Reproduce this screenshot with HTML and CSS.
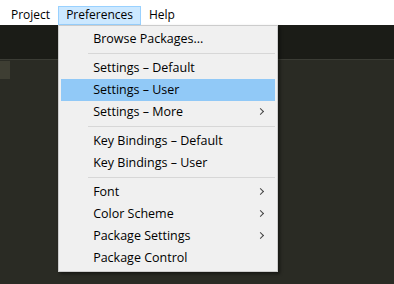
FILE: index.html
```html
<!DOCTYPE html>
<html lang="en">
<head>
  <meta charset="UTF-8" />
  <title>Preferences menu</title>
  <link rel="stylesheet" href="styles.css">
</head>
<body>
  <nav class="menubar">
    <div class="menu-item">Project</div>
    <div class="menu-item open">
      Preferences
      <ul class="dropdown">
        <li>Browse Packages...</li>
        <li class="sep"></li>
        <li>Settings – Default</li>
        <li class="active">Settings – User</li>
        <li class="sub">Settings – More</li>
        <li class="sep"></li>
        <li>Key Bindings – Default</li>
        <li>Key Bindings – User</li>
        <li class="sep"></li>
        <li class="sub">Font</li>
        <li class="sub">Color Scheme</li>
        <li class="sub">Package Settings</li>
        <li>Package Control</li>
      </ul>
    </div>
    <div class="menu-item">Help</div>
  </nav>

  <main class="workspace">
    <div class="tabbar"></div>
    <div class="editor">
      <div class="gutter-mark"></div>
    </div>
  </main>
</body>
</html>
```

FILE: styles.css
```css
* {
  margin: 0;
  padding: 0;
  box-sizing: border-box;
}

html, body {
  height: 100%;
}

body {
  font-family: 'Open Sans', 'Noto Sans', sans-serif;
  font-size: 12px;
  color: #000;
  background: #2a2b24;
  display: flex;
  flex-direction: column;
  overflow: hidden;
}

.menubar {
  display: flex;
  background: #fff;
  height: 25px;
  padding: 6px 0 0 3px;
}

.menu-item {
  position: relative;
  height: 19px;
  line-height: 16px;
  padding: 0 7px;
  border: 1px solid transparent;
  cursor: default;
}

.menu-item.open {
  background: #cce8ff;
  border-color: #99d1ff;
}

.dropdown {
  position: absolute;
  top: 18px;
  left: -1px;
  width: 220px;
  list-style: none;
  background: #f0f0f0;
  border: 1px solid #cccccc;
  box-shadow: 2px 2px 3px rgba(0, 0, 0, 0.45);
  padding: 2px;
  z-index: 10;
}

.dropdown li {
  position: relative;
  height: 22px;
  line-height: 22px;
  padding-left: 32px;
  font-size: 12.5px;
}

.dropdown li.active {
  background: #91c9f7;
}

.dropdown li.sub::after {
  content: "";
  position: absolute;
  right: 12px;
  top: 8px;
  width: 4px;
  height: 4px;
  border-top: 1px solid #444;
  border-right: 1px solid #444;
  transform: rotate(45deg);
}

.dropdown li.sep {
  height: 1px;
  margin: 3px 0 3px 27px;
  padding: 0;
  background: #d7d7d7;
}

.workspace {
  flex: 1;
  display: flex;
  flex-direction: column;
}

.tabbar {
  height: 35px;
  background: #1b1c17;
  border-bottom: 1px solid #3b3c35;
}

.editor {
  flex: 1;
  background: #2a2b24;
  padding-top: 1px;
}

.gutter-mark {
  width: 10px;
  height: 18px;
  background: #3e3e33;
}
```
